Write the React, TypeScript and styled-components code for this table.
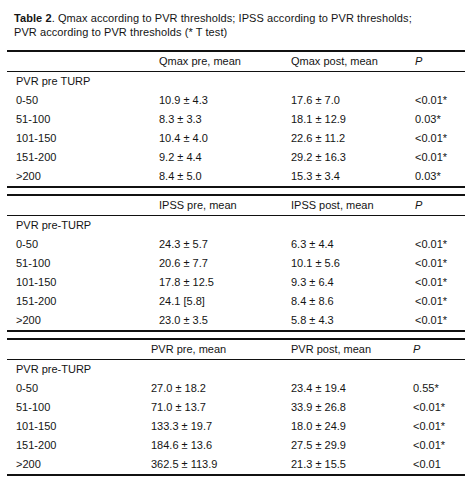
import React from "react";
import styled, { createGlobalStyle } from "styled-components";

const GlobalStyle = createGlobalStyle`
  html, body {
    margin: 0;
    padding: 0;
    background: #ffffff;
  }
  body {
    font-family: "Liberation Sans", Arial, Helvetica, sans-serif;
    color: #141414;
  }
`;

const Page = styled.main`
  width: 474px;
  padding: 11px 0 0 7px;
  box-sizing: border-box;
`;

const Caption = styled.p`
  margin: 0 0 11px 7px;
  font-size: 11px;
  letter-spacing: 0.08px;
  line-height: 14px;

  b {
    font-weight: 700;
  }
`;

const Sections = styled.div`
  display: flex;
  flex-direction: column;
  gap: 6px;
  width: 458px;
`;

const Section = styled.section<{ $cols: string }>`
  border-top: 2px solid #111;
  border-bottom: 2px solid #111;
  display: grid;
  grid-template-columns: ${(p) => p.$cols};
`;

const Cell = styled.div<{ $head?: boolean; $first?: boolean; $italic?: boolean }>`
  height: 19px;
  line-height: 19px;
  font-size: 11px;
  white-space: nowrap;
  padding-left: ${(p) => (p.$first ? "9px" : "0")};
  font-style: ${(p) => (p.$italic ? "italic" : "normal")};
  border-bottom: ${(p) => (p.$head ? "1px solid #111" : "none")};
`;

type Block = {
  cols: string;
  head: [string, string];
  group: string;
  rows: [string, string, string, string][];
};

const blocks: Block[] = [
  {
    cols: "152px 132px 124px 1fr",
    head: ["Qmax pre, mean", "Qmax post, mean"],
    group: "PVR pre TURP",
    rows: [
      ["0-50", "10.9 ± 4.3", "17.6 ± 7.0", "<0.01*"],
      ["51-100", "8.3 ± 3.3", "18.1 ± 12.9", "0.03*"],
      ["101-150", "10.4 ± 4.0", "22.6 ± 11.2", "<0.01*"],
      ["151-200", "9.2 ± 4.4", "29.2 ± 16.3", "<0.01*"],
      [">200", "8.4 ± 5.0", "15.3 ± 3.4", "0.03*"],
    ],
  },
  {
    cols: "152px 132px 124px 1fr",
    head: ["IPSS pre, mean", "IPSS post, mean"],
    group: "PVR pre-TURP",
    rows: [
      ["0-50", "24.3 ± 5.7", "6.3 ± 4.4", "<0.01*"],
      ["51-100", "20.6 ± 7.7", "10.1 ± 5.6", "<0.01*"],
      ["101-150", "17.8 ± 12.5", "9.3 ± 6.4", "<0.01*"],
      ["151-200", "24.1 [5.8]", "8.4 ± 8.6", "<0.01*"],
      [">200", "23.0 ± 3.5", "5.8 ± 4.3", "<0.01*"],
    ],
  },
  {
    cols: "144px 140px 122px 1fr",
    head: ["PVR pre, mean", "PVR post, mean"],
    group: "PVR pre-TURP",
    rows: [
      ["0-50", "27.0 ± 18.2", "23.4 ± 19.4", "0.55*"],
      ["51-100", "71.0 ± 13.7", "33.9 ± 26.8", "<0.01*"],
      ["101-150", "133.3 ± 19.7", "18.0 ± 24.9", "<0.01*"],
      ["151-200", "184.6 ± 13.6", "27.5 ± 29.9", "<0.01*"],
      [">200", "362.5 ± 113.9", "21.3 ± 15.5", "<0.01"],
    ],
  },
];

export default function App() {
  return (
    <>
      <GlobalStyle />
      <Page>
        <Caption>
          <b>Table 2</b>. Qmax according to PVR thresholds; IPSS according to PVR thresholds;
          <br />
          PVR according to PVR thresholds (* T test)
        </Caption>
        <Sections>
          {blocks.map((b, i) => (
            <Section key={i} $cols={b.cols}>
              <Cell $head $first />
              <Cell $head>{b.head[0]}</Cell>
              <Cell $head>{b.head[1]}</Cell>
              <Cell $head $italic>P</Cell>

              <Cell $first>{b.group}</Cell>
              <Cell />
              <Cell />
              <Cell />

              {b.rows.map((r) => (
                <React.Fragment key={r[0]}>
                  <Cell $first>{r[0]}</Cell>
                  <Cell>{r[1]}</Cell>
                  <Cell>{r[2]}</Cell>
                  <Cell>{r[3]}</Cell>
                </React.Fragment>
              ))}
            </Section>
          ))}
        </Sections>
      </Page>
    </>
  );
}
